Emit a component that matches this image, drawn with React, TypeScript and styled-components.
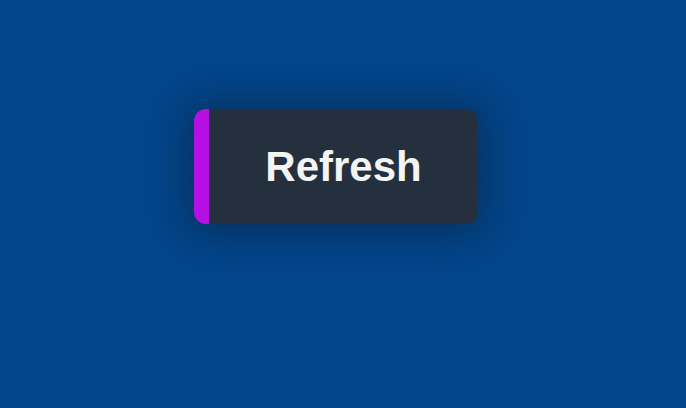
import React from "react";
import styled, { createGlobalStyle } from "styled-components";

const Global = createGlobalStyle`
  html, body { margin: 0; padding: 0; background: #03468b; }
  body { width: 686px; height: 408px; overflow: hidden; }
`;

const Page = styled.div`
  display: flex;
  align-items: flex-start;
  padding: 109px 0 0 194px;
  height: 408px;
  box-sizing: border-box;
`;

const Button = styled.button`
  width: 284px;
  height: 115px;
  box-sizing: border-box;
  border: none;
  border-left: 15px solid #b50fe3;
  border-radius: 12px;
  background: #24303d;
  color: #f4f4f4;
  font-family: "Liberation Sans", Arial, sans-serif;
  font-weight: 700;
  font-size: 42px;
  padding: 0;
  display: flex;
  align-items: center;
  justify-content: center;
  box-shadow: 0 2px 44px 8px rgba(10, 25, 50, 0.5);
  cursor: pointer;
`;

export default function App() {
  return (
    <>
      <Global />
      <Page>
        <Button>Refresh</Button>
      </Page>
    </>
  );
}
